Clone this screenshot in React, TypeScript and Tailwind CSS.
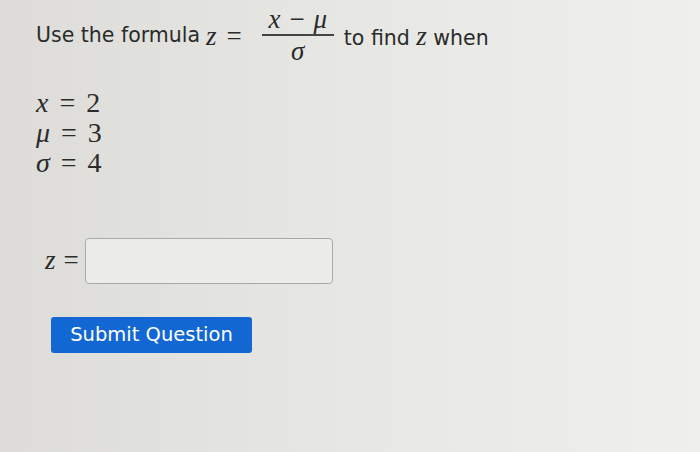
export default function App() {
  const serif = "font-['Liberation_Serif',serif]";
  return (
    <div className="h-[452px] w-[700px] overflow-hidden bg-gradient-to-r from-[#dddcd8] via-[#e7e7e4] to-[#efefed] text-[#2b2b2b] font-['DejaVu_Sans','Verdana',sans-serif]">
      <div className="pl-[36px] pt-[6px]">
        <div className="flex items-center text-[20.5px]">
          <span>Use the formula</span>
          <span className={`${serif} ml-[6px] flex items-center text-[27px]`}>
            <i>z</i>
            <span className="ml-[10px]">=</span>
          </span>
          <span className={`${serif} ml-[20px] flex flex-col items-center text-[27px]`}>
            <span className="flex items-center px-[2px] leading-[26px]">
              <i>x</i>
              <span className="mx-[9px]">−</span>
              <i>μ</i>
            </span>
            <span className="mt-[2px] h-[1.5px] w-[72px] bg-[#444]" />
            <span className="leading-[30px]">
              <i>σ</i>
            </span>
          </span>
          <span className="ml-[10px]">
            to find <i className={`${serif} text-[27px]`}>z</i> when
          </span>
        </div>

        <div className={`${serif} mt-[22px] flex flex-col text-[28px] leading-[30px]`}>
          {[
            ["x", "2"],
            ["μ", "3"],
            ["σ", "4"],
          ].map(([v, n]) => (
            <span key={v} className="flex items-center">
              <i>{v}</i>
              <span className="mx-[11px]">=</span>
              {n}
            </span>
          ))}
        </div>

        <div className="mt-[60px] ml-[9px] flex items-center">
          <span className={`${serif} flex items-center text-[27px]`}>
            <i>z</i>
            <span className="ml-[8px]">=</span>
          </span>
          <div className="ml-[6px] h-[46px] w-[248px] rounded-[4px] border border-[#a9a9a7] bg-[#ecedeb]" />
        </div>

        <button className="mt-[33px] ml-[15px] h-[36px] w-[201px] rounded-[3px] bg-[#1267d3] text-[19.5px] text-white">
          Submit Question
        </button>
      </div>
    </div>
  );
}
